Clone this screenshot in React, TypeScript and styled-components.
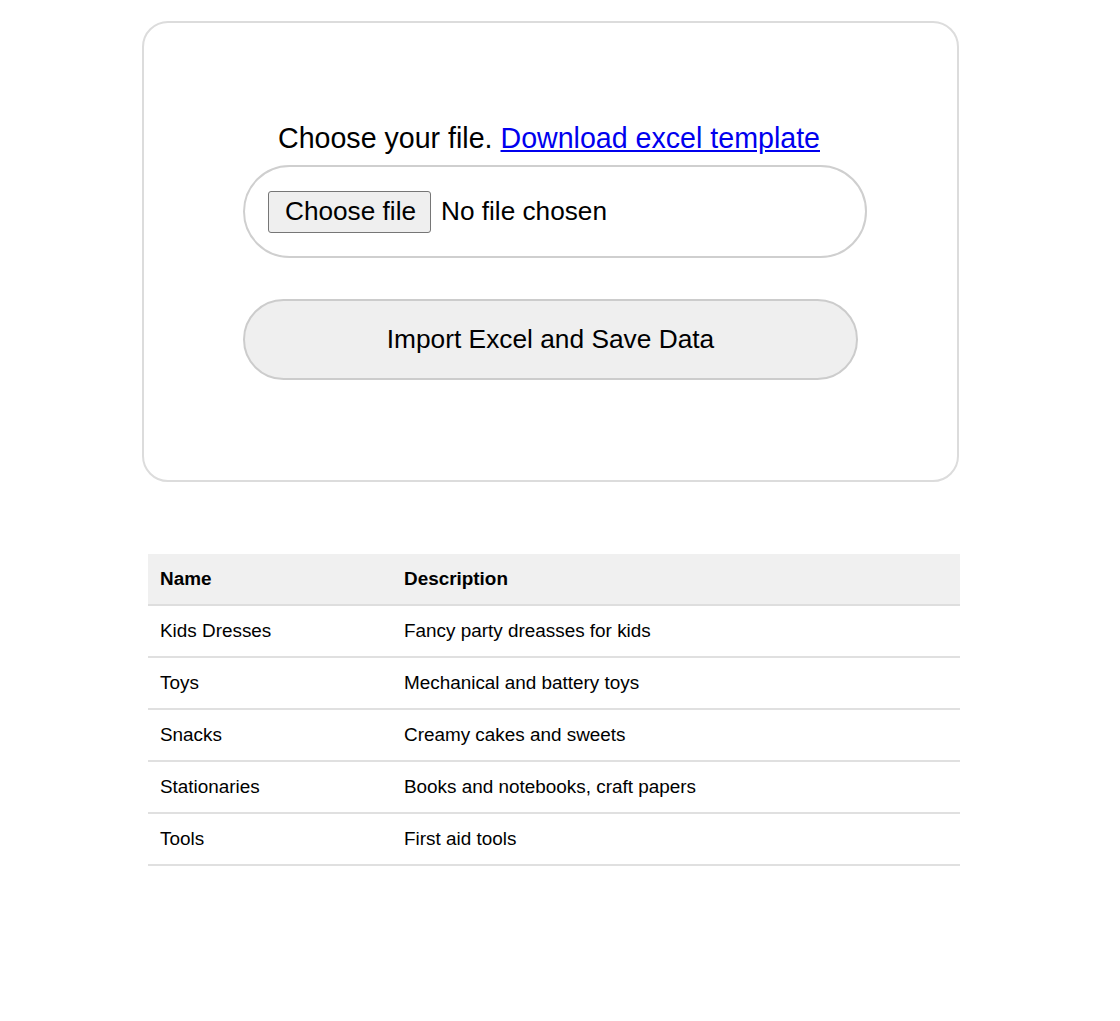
import React from "react";
import styled, { createGlobalStyle } from "styled-components";

const Global = createGlobalStyle`
  html, body { margin: 0; padding: 0; background: #fff; }
  body { font-family: "Liberation Sans", Arial, sans-serif; color: #000; }
`;

const Page = styled.div`
  display: flex;
  flex-direction: column;
  padding: 21px 0 0 142px;
`;

const Card = styled.section`
  box-sizing: border-box;
  width: 817px;
  height: 461px;
  border: 2px solid #dcdcdc;
  border-radius: 26px;
  padding: 98px 0 0 99px;
  display: flex;
  flex-direction: column;
  align-items: flex-start;
`;

const Title = styled.div`
  width: 616px;
  text-align: center;
  font-size: 28.6px;
  line-height: 34px;
  margin-left: -2px;
`;

const Link = styled.a`
  color: #0000ee;
  text-decoration: underline;
`;

const FileBox = styled.label`
  box-sizing: border-box;
  margin-top: 10px;
  width: 624px;
  height: 93px;
  border: 2px solid #cfcfcf;
  border-radius: 47px;
  display: flex;
  align-items: center;
  padding: 0 0 0 23px;
  font-size: 26.2px;
  cursor: pointer;
`;

const HiddenInput = styled.input`
  display: none;
`;

const FakeButton = styled.span`
  box-sizing: border-box;
  height: 42px;
  padding: 0 14px 0 16px;
  display: inline-flex;
  align-items: center;
  background: #efefef;
  border: 1px solid #767676;
  border-radius: 3px;
  margin-right: 10px;
`;

const ImportButton = styled.button`
  box-sizing: border-box;
  margin-top: 41px;
  width: 615px;
  height: 81px;
  background: #efefef;
  border: 2px solid #cccccc;
  border-radius: 41px;
  font-family: "Liberation Sans", Arial, sans-serif;
  font-size: 26.3px;
  color: #000;
  cursor: pointer;
`;

const Table = styled.table`
  margin: 72px 0 0 6px;
  width: 812px;
  border-collapse: collapse;
  font-size: 18.9px;
`;

const HeadRow = styled.tr`
  background: #f0f0f0;
`;

const Th = styled.th<{ $w?: string }>`
  text-align: left;
  font-weight: bold;
  height: 51px;
  padding: 0 12px;
  border-bottom: 2px solid #dedede;
  width: ${(p) => p.$w ?? "auto"};
  box-sizing: border-box;
`;

const Td = styled.td`
  height: 50px;
  padding: 0 12px;
  border-bottom: 2px solid #e0e0e0;
`;

const rows = [
  ["Kids Dresses", "Fancy party dreasses for kids"],
  ["Toys", "Mechanical and battery toys"],
  ["Snacks", "Creamy cakes and sweets"],
  ["Stationaries", "Books and notebooks, craft papers"],
  ["Tools", "First aid tools"],
];

export default function App() {
  return (
    <Page>
      <Global />
      <Card>
        <Title>
          Choose your file. <Link href="#">Download excel template</Link>
        </Title>
        <FileBox>
          <HiddenInput type="file" />
          <FakeButton>Choose file</FakeButton>
          No file chosen
        </FileBox>
        <ImportButton type="button">Import Excel and Save Data</ImportButton>
      </Card>
      <Table>
        <thead>
          <HeadRow>
            <Th $w="244px">Name</Th>
            <Th>Description</Th>
          </HeadRow>
        </thead>
        <tbody>
          {rows.map(([n, d]) => (
            <tr key={n}>
              <Td>{n}</Td>
              <Td>{d}</Td>
            </tr>
          ))}
        </tbody>
      </Table>
    </Page>
  );
}
